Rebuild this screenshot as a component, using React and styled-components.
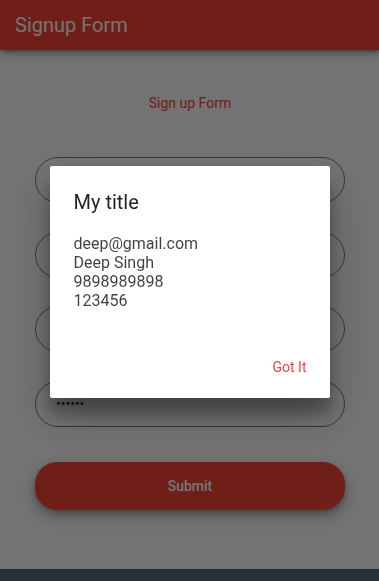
import React from "react";
import styled, { createGlobalStyle } from "styled-components";

const Global = createGlobalStyle`
  html, body { margin: 0; padding: 0; height: 100%; overflow: hidden; }
  body { font-family: Roboto, "Noto Sans", Arial, sans-serif; background: #fafafa; }
  * { box-sizing: border-box; }
`;

const Page = styled.div`
  min-height: 100vh;
  background: #fafafa;
  display: flex;
  flex-direction: column;
`;

const AppBar = styled.header`
  height: 50px;
  background: #f44336;
  display: flex;
  align-items: center;
  padding: 0 15px;
  box-shadow: 0 3px 8px rgba(0, 0, 0, 0.35), 0 1px 3px rgba(0, 0, 0, 0.25);
  position: relative;
  z-index: 1;
`;

const AppTitle = styled.h1`
  margin: 0;
  font-size: 20px;
  font-weight: 400;
  color: #ffffff;
  line-height: 24px;
`;

const Form = styled.form`
  display: flex;
  flex-direction: column;
  padding: 43px 34px 0 35px;
`;

const FormHeading = styled.h2`
  margin: 0 0 44px;
  text-align: center;
  font-size: 14px;
  font-weight: 400;
  line-height: 20px;
  color: #f44336;
`;

const Fields = styled.div`
  display: flex;
  flex-direction: column;
  gap: 28.5px;
`;

const Field = styled.input`
  height: 46px;
  width: 100%;
  border: 1px solid #7a7a7a;
  border-radius: 23px;
  background: transparent;
  padding: 0 20px;
  font-family: Roboto, Arial, sans-serif;
  font-size: 14px;
  color: #333;
  outline: none;
`;

const SubmitButton = styled.button`
  margin-top: 35.5px;
  height: 48px;
  width: 100%;
  border: none;
  border-radius: 22px;
  background: #f44336;
  color: #ffffff;
  font-family: Roboto, Arial, sans-serif;
  font-size: 14px;
  font-weight: 500;
  box-shadow: 0 6px 14px rgba(0, 0, 0, 0.3), 0 2px 5px rgba(0, 0, 0, 0.2);
`;

const Overlay = styled.div`
  position: fixed;
  inset: 0;
  background: rgba(0, 0, 0, 0.54);
  display: flex;
  justify-content: center;
  align-items: center;
  padding-bottom: 17px;
  z-index: 10;
`;

const Dialog = styled.div`
  width: 280px;
  height: 232px;
  background: #ffffff;
  border-radius: 2px;
  display: flex;
  flex-direction: column;
  box-shadow: 0 19px 38px rgba(0, 0, 0, 0.3), 0 15px 12px rgba(0, 0, 0, 0.22);
`;

const DialogTitle = styled.h3`
  margin: 0;
  padding: 24px 24px 0;
  font-size: 20px;
  font-weight: 400;
  line-height: 24px;
  color: rgba(0, 0, 0, 0.87);
`;

const DialogBody = styled.div`
  padding: 19.5px 24px 0;
  font-size: 16px;
  line-height: 19px;
  color: rgba(0, 0, 0, 0.75);
`;

const DialogActions = styled.div`
  margin-top: auto;
  display: flex;
  justify-content: flex-end;
  padding: 0 15px 13px;
`;

const TextButton = styled.button`
  height: 36px;
  border: none;
  background: transparent;
  padding: 0 8px;
  font-family: Roboto, Arial, sans-serif;
  font-size: 14px;
  color: #f44336;
`;

const Snackbar = styled.div`
  position: fixed;
  left: 0;
  right: 0;
  bottom: 0;
  height: 12px;
  overflow: hidden;
  background: #263238;
  z-index: 20;
  padding-top: 10px;
  text-align: center;
`;

const SnackText = styled.span`
  font-size: 14px;
  line-height: 20px;
  color: #ffffff;
  letter-spacing: 1.8px;
`;

const details = ["deep@gmail.com", "Deep Singh", "9898989898", "123456"];

export default function App() {
  return (
    <>
      <Global />
      <Page>
        <AppBar>
          <AppTitle>Signup Form</AppTitle>
        </AppBar>
        <Form onSubmit={(e) => e.preventDefault()}>
          <FormHeading>Sign up Form</FormHeading>
          <Fields>
            <Field type="email" defaultValue="deep@gmail.com" />
            <Field type="text" defaultValue="Deep Singh" />
            <Field type="tel" defaultValue="9898989898" />
            <Field type="password" defaultValue="123456" />
          </Fields>
          <SubmitButton type="submit">Submit</SubmitButton>
        </Form>
      </Page>
      <Overlay>
        <Dialog role="dialog">
          <DialogTitle>My title</DialogTitle>
          <DialogBody>
            {details.map((d) => (
              <div key={d}>{d}</div>
            ))}
          </DialogBody>
          <DialogActions>
            <TextButton>Got It</TextButton>
          </DialogActions>
        </Dialog>
      </Overlay>
      <Snackbar>
        <SnackText>record was saved</SnackText>
      </Snackbar>
    </>
  );
}
